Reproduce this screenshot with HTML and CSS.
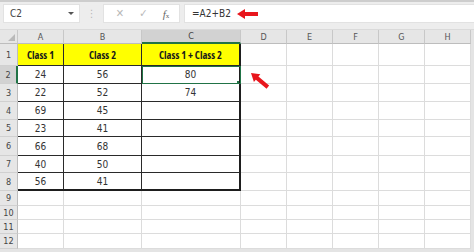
FILE: index.html
```html
<!DOCTYPE html>
<html lang="en">

<head>
    <meta charset="UTF-8">
    <meta name="viewport" content="width=device-width, initial-scale=1.0">
    <title>Excel sum formula</title>
    <link rel="stylesheet" href="styles.css">
</head>

<body>
    <div class="window">
        <div class="toolbar">
            <div class="nameBox">
                <span>C2</span>
                <span class="dropArrow"></span>
            </div>
            <div class="dots">&#8942;</div>
            <div class="btnBox">
                <span class="btn">&#10005;</span>
                <span class="btn">&#10003;</span>
                <span class="btn fx"><i>f</i><small>x</small></span>
            </div>
            <div class="formulaBox">
                <span>=A2+B2</span>
                <svg class="arrowLeft" width="22" height="10" viewBox="0 0 22 10">
                    <polygon points="0,5 8,0 8,3 21,3 21,7 8,7 8,10" fill="#e8161d" />
                </svg>
            </div>
        </div>

        <table class="sheet">
            <colgroup>
                <col style="width:18px">
                <col style="width:46px">
                <col style="width:78px">
                <col style="width:99px">
                <col style="width:46px">
                <col style="width:46px">
                <col style="width:46px">
                <col style="width:46px">
                <col style="width:46px">
            </colgroup>
            <tr class="colHead">
                <th class="corner"><span class="cornerMark"></span></th>
                <th>A</th>
                <th>B</th>
                <th class="active">C</th>
                <th>D</th>
                <th>E</th>
                <th>F</th>
                <th>G</th>
                <th>H</th>
            </tr>
            <tr class="r1">
                <th class="rowNum">1</th>
                <td class="data head">Class 1</td>
                <td class="data head">Class 2</td>
                <td class="data head lastCol">Class 1 + Class 2</td>
                <td></td><td></td><td></td><td></td><td></td>
            </tr>
            <tr class="h18">
                <th class="rowNum active">2</th>
                <td class="data">24</td>
                <td class="data">56</td>
                <td class="data lastCol selected">80</td>
                <td></td><td></td><td></td><td></td><td></td>
            </tr>
            <tr class="h18">
                <th class="rowNum">3</th>
                <td class="data">22</td>
                <td class="data">52</td>
                <td class="data lastCol">74</td>
                <td></td><td></td><td></td><td></td><td></td>
            </tr>
            <tr class="h18">
                <th class="rowNum">4</th>
                <td class="data">69</td>
                <td class="data">45</td>
                <td class="data lastCol"></td>
                <td></td><td></td><td></td><td></td><td></td>
            </tr>
            <tr class="h17">
                <th class="rowNum">5</th>
                <td class="data">23</td>
                <td class="data">41</td>
                <td class="data lastCol"></td>
                <td></td><td></td><td></td><td></td><td></td>
            </tr>
            <tr class="h19">
                <th class="rowNum">6</th>
                <td class="data">66</td>
                <td class="data">68</td>
                <td class="data lastCol"></td>
                <td></td><td></td><td></td><td></td><td></td>
            </tr>
            <tr class="h17">
                <th class="rowNum">7</th>
                <td class="data">40</td>
                <td class="data">50</td>
                <td class="data lastCol"></td>
                <td></td><td></td><td></td><td></td><td></td>
            </tr>
            <tr class="h18 lastRow">
                <th class="rowNum">8</th>
                <td class="data">56</td>
                <td class="data">41</td>
                <td class="data lastCol"></td>
                <td></td><td></td><td></td><td></td><td></td>
            </tr>
            <tr class="h15">
                <th class="rowNum">9</th>
                <td></td><td></td><td></td><td></td><td></td><td></td><td></td><td></td>
            </tr>
            <tr class="h14">
                <th class="rowNum">10</th>
                <td></td><td></td><td></td><td></td><td></td><td></td><td></td><td></td>
            </tr>
            <tr class="h14">
                <th class="rowNum">11</th>
                <td></td><td></td><td></td><td></td><td></td><td></td><td></td><td></td>
            </tr>
            <tr class="h15">
                <th class="rowNum">12</th>
                <td></td><td></td><td></td><td></td><td></td><td></td><td></td><td></td>
            </tr>
        </table>

        <!-- arrow pointing at the selected cell -->
        <svg class="arrowCell" width="24" height="22" viewBox="0 0 24 22">
            <g transform="translate(2,2) rotate(40)">
                <polygon points="0,0 8,-5 8,-2 22,-2 22,2 8,2 8,5" fill="#e8161d" />
            </g>
        </svg>
    </div>
</body>

</html>
```

FILE: styles.css
```css
* {
    box-sizing: border-box;
    padding: 0;
    margin: 0;
}

body {
    background-color: #e4e4e4;
    font-family: "DejaVu Sans Condensed", "Liberation Sans", sans-serif;
    width: 474px;
    height: 252px;
    overflow: hidden;
}

.window {
    position: relative;
    height: 252px;
}

.toolbar {
    height: 30px;
    border-top: 2px solid #cdcdcd;
    padding: 2px 0 0 3px;
    display: flex;
    align-items: flex-start;
    background-color: #ededed;
    border-bottom: 1px solid #dadada;
}

.nameBox {
    width: 77px;
    height: 19px;
    background-color: #fff;
    border: 1px solid #e2e2e2;
    display: flex;
    align-items: center;
    justify-content: space-between;
    padding: 0 5px 0 6px;
    font-size: 10px;
    color: #444;
}

.dropArrow {
    width: 0;
    height: 0;
    border-left: 3px solid transparent;
    border-right: 3px solid transparent;
    border-top: 3px solid #555;
}

.dots {
    width: 23px;
    height: 19px;
    text-align: center;
    line-height: 19px;
    font-size: 10px;
    color: #b5b5b5;
}

.btnBox {
    width: 77px;
    height: 19px;
    background-color: #fff;
    border: 1px solid #e2e2e2;
    display: flex;
    align-items: center;
    justify-content: space-around;
    padding: 0 2px 0 4px;
    color: #b8b8b8;
    font-size: 11px;
}

.fx {
    color: #666;
    font-family: "Liberation Serif", serif;
    font-size: 11px;
}

.fx small {
    font-size: 7px;
}

.formulaBox {
    flex: 1;
    height: 19px;
    margin-left: 4px;
    background-color: #fff;
    border: 1px solid #e2e2e2;
    border-right: none;
    display: flex;
    align-items: center;
    padding-left: 7px;
    font-size: 10px;
    color: #333;
}

.arrowLeft {
    margin-left: 6px;
}

.sheet {
    border-collapse: separate;
    border-spacing: 0;
    table-layout: fixed;
    width: 471px;
    background-color: #fff;
}

.sheet th,
.sheet td {
    border-right: 1px solid #dcdcdc;
    border-bottom: 1px solid #dcdcdc;
    text-align: center;
    padding: 0;
    overflow: hidden;
    white-space: nowrap;
}

.colHead {
    height: 14px;
}

.colHead th {
    background-color: #e6e6e6;
    font-weight: normal;
    font-size: 9px;
    color: #555;
    border-right: 1px solid #c8c8c8;
    border-bottom: 1px solid #bdbdbd;
}

.colHead th.active {
    background-color: #d2d2d2;
    color: #444;
    border-bottom: 2px solid #217346;
}

.corner {
    position: relative;
}

.cornerMark {
    position: absolute;
    right: 2px;
    bottom: 2px;
    width: 0;
    height: 0;
    border-left: 7px solid transparent;
    border-bottom: 7px solid #b9b9b9;
}

.rowNum {
    background-color: #e6e6e6;
    font-weight: normal;
    font-size: 9px;
    color: #444;
    border-right: 1px solid #bdbdbd !important;
    border-bottom: 1px solid #d0d0d0 !important;
}

.rowNum.active {
    background-color: #d2d2d2;
    border-right: 2px solid #217346 !important;
}

.r1 {
    height: 22px;
}

.h19 {
    height: 19px;
}

.h18 {
    height: 18px;
}

.h17 {
    height: 17px;
}

.h15 {
    height: 15px;
}

.h14 {
    height: 14px;
}

.data {
    font-size: 10px;
    color: #333;
    border-right: 1px solid #2a2a2a !important;
    border-bottom: 1px solid #2a2a2a !important;
}

.head {
    background-color: #ffff00;
    font-family: "Open Sans", "DejaVu Sans Condensed", sans-serif;
    font-stretch: 86%;
    font-weight: bold;
    color: #1a1a1a;
    font-size: 10.5px;
}

.lastCol {
    border-right: 2px solid #1e1e1e !important;
}

.lastRow .data {
    border-bottom: 2px solid #1e1e1e !important;
}

.selected {
    position: relative;
    outline: 1px solid #217346;
    outline-offset: -1px;
}

.selected::after {
    content: "";
    position: absolute;
    right: -2px;
    bottom: -2px;
    width: 4px;
    height: 4px;
    background-color: #217346;
}

.arrowCell {
    position: absolute;
    left: 249px;
    top: 71px;
}
```
